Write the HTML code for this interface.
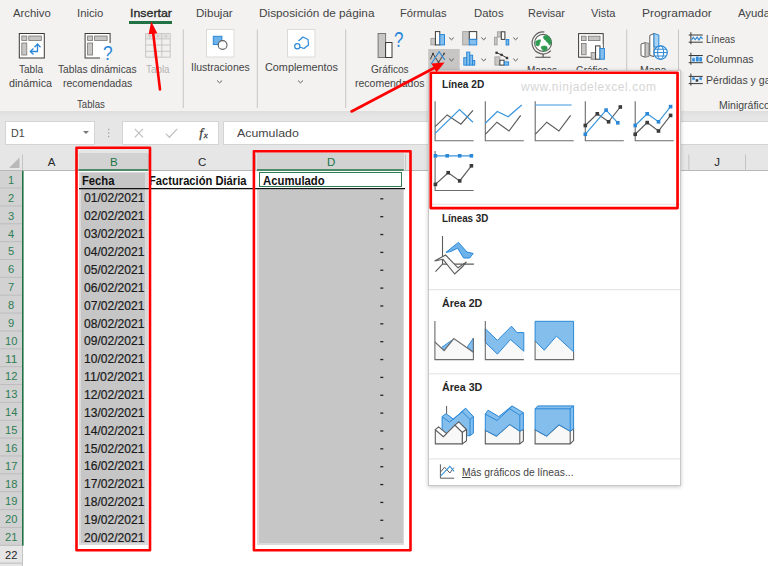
<!DOCTYPE html>
<html lang="es"><head><meta charset="utf-8"><title>Excel - Insertar grafico de lineas</title>
<style>
html,body{margin:0;padding:0;}
body{width:768px;height:566px;overflow:hidden;position:relative;background:#fff;font-family:"Liberation Sans",sans-serif;}
#root{position:absolute;left:0;top:0;width:768px;height:566px;overflow:hidden;}
#root div{position:absolute;box-sizing:border-box;}
#root span{position:absolute;white-space:nowrap;transform-origin:0 50%;}
#root svg{position:absolute;left:0;top:0;}
</style></head><body><div id="root">
<div style="left:0px;top:0px;width:768px;height:112px;background:#f3f2f1;"></div>
<div style="left:0px;top:111px;width:768px;height:42px;background:#e6e6e6;background:linear-gradient(#dedede 0px,#e3e3e3 3px,#e6e6e6 7px);"></div>
<div style="left:0px;top:152px;width:768px;height:414px;background:#ffffff;"></div>
<span style="left:12.5px;top:8.19px;font-size:11px;line-height:11px;color:#444444;transform:scaleX(1.0276);">Archivo</span>
<span style="left:77.3px;top:8.19px;font-size:11px;line-height:11px;color:#444444;transform:scaleX(1.0277);">Inicio</span>
<span style="left:129.5px;top:8.19px;font-size:11px;line-height:11px;color:#2b2b2b;transform:scaleX(1.1261);-webkit-text-stroke:0.32px #2b2b2b;">Insertar</span>
<span style="left:195.5px;top:8.19px;font-size:11px;line-height:11px;color:#444444;transform:scaleX(1.0528);">Dibujar</span>
<span style="left:258.5px;top:8.19px;font-size:11px;line-height:11px;color:#444444;transform:scaleX(1.0730);">Disposición de página</span>
<span style="left:400.3px;top:8.19px;font-size:11px;line-height:11px;color:#444444;transform:scaleX(1.0143);">Fórmulas</span>
<span style="left:473.7px;top:8.19px;font-size:11px;line-height:11px;color:#444444;transform:scaleX(1.0296);">Datos</span>
<span style="left:528.4px;top:8.19px;font-size:11px;line-height:11px;color:#444444;transform:scaleX(0.9920);">Revisar</span>
<span style="left:591px;top:8.19px;font-size:11px;line-height:11px;color:#444444;transform:scaleX(1.0055);">Vista</span>
<span style="left:641.8px;top:8.19px;font-size:11px;line-height:11px;color:#444444;transform:scaleX(1.0872);">Programador</span>
<span style="left:738px;top:8.19px;font-size:11px;line-height:11px;color:#444444;transform:scaleX(1.0323);">Ayuda</span>
<div style="left:129.2px;top:21.4px;width:42.9px;height:2.6px;background:#217346;"></div>
<svg width="768" height="566" viewBox="0 0 768 566"><line x1="183.3" y1="29.5" x2="183.3" y2="108" stroke="#cbc9c7" stroke-width="1.1"/><line x1="257.3" y1="29.5" x2="257.3" y2="108" stroke="#cbc9c7" stroke-width="1.1"/><line x1="345.7" y1="29.5" x2="345.7" y2="108" stroke="#cbc9c7" stroke-width="1.1"/><line x1="626.7" y1="29.5" x2="626.7" y2="108" stroke="#cbc9c7" stroke-width="1.1"/><line x1="678.5" y1="29.5" x2="678.5" y2="108" stroke="#cbc9c7" stroke-width="1.1"/><rect x="19.3" y="33.5" width="25" height="24.5" fill="#fff" stroke="#3b3a39" stroke-width="1"/><rect x="21.8" y="36" width="5" height="4.5" fill="#c8c6c4" stroke="#797775" stroke-width="0.8"/><rect x="28.8" y="36" width="12.5" height="4.5" fill="#c8c6c4" stroke="#797775" stroke-width="0.8"/><rect x="21.8" y="43" width="5" height="12" fill="#c8c6c4" stroke="#797775" stroke-width="0.8"/><path d="M30.5 51.5 H37.5 V44.5" fill="none" stroke="#2b88d8" stroke-width="1.3"/><path d="M33.5 48.5 L30.3 51.5 L33.5 54.5" fill="none" stroke="#2b88d8" stroke-width="1.3"/><path d="M34.5 47.2 L37.5 44 L40.5 47.2" fill="none" stroke="#2b88d8" stroke-width="1.3"/><rect x="85.1" y="33.5" width="25" height="24.5" fill="#fff" stroke="#3b3a39" stroke-width="1"/><rect x="87.6" y="36" width="5" height="4.5" fill="#c8c6c4" stroke="#797775" stroke-width="0.8"/><rect x="94.6" y="36" width="12.5" height="4.5" fill="#c8c6c4" stroke="#797775" stroke-width="0.8"/><rect x="87.6" y="43" width="5" height="12" fill="#c8c6c4" stroke="#797775" stroke-width="0.8"/><rect x="100" y="43" width="14" height="17" fill="#f3f2f1"/><rect x="100" y="43" width="10" height="14.5" fill="#fff"/><g stroke="#c8c6c4" stroke-width="1" fill="none"><rect x="145.6" y="33.6" width="24.6" height="23.6" fill="#f1f0ef"/><rect x="146" y="34" width="23.8" height="4.8" fill="#e4e2e0" stroke="none"/><path d="M145.6 38.9 H170.2 M145.6 45 H170.2 M145.6 51.3 H170.2 M154.2 33.6 V57.2 M161.8 33.6 V57.2"/></g><path d="M148.3 35.4 h3.2 l-1.6 1.9z M156.4 35.4 h3.2 l-1.6 1.9z M164.4 35.4 h3.2 l-1.6 1.9z" fill="#bebbb8"/></svg>
<span style="left:102.6px;top:41.52px;font-size:21px;line-height:21px;color:#2b88d8;transform:scaleX(0.8214);">?</span>
<span style="left:18.8px;top:64.31px;font-size:10.5px;line-height:10.5px;color:#444444;transform:scaleX(0.9558);">Tabla</span>
<span style="left:9.3px;top:78.41px;font-size:10.5px;line-height:10.5px;color:#444444;transform:scaleX(1.0230);">dinámica</span>
<span style="left:57.8px;top:64.31px;font-size:10.5px;line-height:10.5px;color:#444444;transform:scaleX(0.9758);">Tablas dinámicas</span>
<span style="left:62.8px;top:78.41px;font-size:10.5px;line-height:10.5px;color:#444444;transform:scaleX(0.9961);">recomendadas</span>
<span style="left:146px;top:64.31px;font-size:10.5px;line-height:10.5px;color:#b5b3b1;transform:scaleX(0.9399);">Tabla</span>
<span style="left:77px;top:98.91px;font-size:10.5px;line-height:10.5px;color:#444444;transform:scaleX(0.9157);">Tablas</span>
<svg width="768" height="566" viewBox="0 0 768 566"><rect x="206.5" y="29.5" width="27.5" height="27.5" fill="#fff" stroke="#dddbd9" stroke-width="1"/><rect x="213.3" y="36.3" width="8.6" height="8.2" fill="#6cb2eb" stroke="#2b88d8" stroke-width="1"/><circle cx="222.6" cy="45" r="4.4" fill="#fff" stroke="#605e5c" stroke-width="1.1"/></svg>
<span style="left:191px;top:62.41px;font-size:10.5px;line-height:10.5px;color:#444444;transform:scaleX(0.9974);">Ilustraciones</span>
<svg width="768" height="566" viewBox="0 0 768 566"><path d="M217.1 80.5 L219.6 82.9 L222.1 80.5" fill="none" stroke="#605e5c" stroke-width="1"/><rect x="287.5" y="29.5" width="27.5" height="27.5" fill="#fff" stroke="#dddbd9" stroke-width="1"/><path d="M298.5 41 L303 37 L308 39.5 L308.5 45 L304 48.5 L299.5 47" fill="none" stroke="#2b88d8" stroke-width="1.2" stroke-linejoin="round"/><circle cx="297.3" cy="46.3" r="2.6" fill="#fff" stroke="#2b88d8" stroke-width="1.2"/></svg>
<span style="left:264.8px;top:62.41px;font-size:10.5px;line-height:10.5px;color:#444444;transform:scaleX(1.0336);">Complementos</span>
<svg width="768" height="566" viewBox="0 0 768 566"><path d="M298 80.5 L300.5 82.9 L303 80.5" fill="none" stroke="#605e5c" stroke-width="1"/><rect x="378.1" y="33.5" width="7.5" height="24" fill="#c8c6c4" stroke="#797775" stroke-width="1"/><rect x="385.6" y="42.5" width="6.4" height="15" fill="#fff" stroke="#3b3a39" stroke-width="1"/></svg>
<span style="left:393.8px;top:30.00px;font-size:21.5px;line-height:21.5px;color:#2b88d8;transform:scaleX(0.7854);">?</span>
<span style="left:371px;top:64.31px;font-size:10.5px;line-height:10.5px;color:#444444;transform:scaleX(0.9618);">Gráficos</span>
<span style="left:355.2px;top:78.41px;font-size:10.5px;line-height:10.5px;color:#444444;transform:scaleX(1.0004);">recomendados</span>
<svg width="768" height="566" viewBox="0 0 768 566"><rect x="428.2" y="49" width="31.5" height="21.5" fill="#c8c6c4"/><rect x="430.9" y="38.4" width="4.5" height="6.5" fill="#c8c6c4" stroke="#a19f9d" stroke-width="0.9"/><rect x="435.4" y="31.6" width="4.4" height="13.3" fill="#fff" stroke="#3b3a39" stroke-width="1"/><rect x="439.9" y="34.6" width="4.6" height="10.3" fill="#83beec" stroke="#2b88d8" stroke-width="1"/><path d="M449.2 37.6 L451.5 39.8 L453.8 37.6" fill="none" stroke="#555350" stroke-width="1"/><rect x="462.7" y="31.6" width="6.6" height="13.3" fill="#c8c6c4" stroke="#a19f9d" stroke-width="0.9"/><rect x="469.3" y="31.6" width="7.4" height="7.8" fill="#fff" stroke="#3b3a39" stroke-width="1"/><rect x="469.3" y="39.4" width="7.4" height="5.5" fill="#83beec" stroke="#2b88d8" stroke-width="1"/><path d="M481.4 37.6 L483.7 39.8 L486.0 37.6" fill="none" stroke="#555350" stroke-width="1"/><rect x="494.5" y="37.2" width="2.6" height="7.7" fill="#c8c6c4" stroke="#a19f9d" stroke-width="0.9"/><rect x="497.4" y="31.8" width="3.6" height="5.2" fill="#c8c6c4" stroke="#a19f9d" stroke-width="0.9"/><rect x="501.3" y="31.8" width="3.6" height="7.6" fill="#fff" stroke="#3b3a39" stroke-width="1"/><rect x="506.2" y="39.6" width="2.5" height="5.3" fill="#83beec" stroke="#2b88d8" stroke-width="1.1"/><path d="M513.3 37.6 L515.6 39.8 L517.9 37.6" fill="none" stroke="#555350" stroke-width="1"/><path d="M430.4 59.3 L432.9 53.6 L438.5 62.4 L444.1 53.6" fill="none" stroke="#3b3a39" stroke-width="1"/><path d="M431 64.3 L439.1 51.8 L444.8 59.9" fill="none" stroke="#2b88d8" stroke-width="1.1"/><rect x="432.1" y="52.8" width="1.6" height="1.6" fill="#3b3a39"/><rect x="437.7" y="61.6" width="1.6" height="1.6" fill="#3b3a39"/><rect x="443.3" y="52.8" width="1.6" height="1.6" fill="#3b3a39"/><path d="M449.2 58.7 L451.5 60.9 L453.8 58.7" fill="none" stroke="#555350" stroke-width="1"/><rect x="463.8" y="57.7" width="2.9" height="7.4" fill="#83beec" stroke="#2b88d8" stroke-width="1"/><rect x="466.7" y="52.1" width="3.1" height="13.0" fill="#83beec" stroke="#2b88d8" stroke-width="1"/><rect x="469.8" y="55.2" width="2.8" height="9.9" fill="#83beec" stroke="#2b88d8" stroke-width="1"/><rect x="472.6" y="60.5" width="2.1" height="4.6" fill="#83beec" stroke="#2b88d8" stroke-width="1"/><path d="M481.4 58.7 L483.7 60.9 L486.0 58.7" fill="none" stroke="#555350" stroke-width="1"/><rect x="494.9" y="56.9" width="4.9" height="8.2" fill="#c8c6c4" stroke="#a19f9d" stroke-width="0.9"/><rect x="499.9" y="60.2" width="4.2" height="4.9" fill="#fff" stroke="#3b3a39" stroke-width="1"/><rect x="504.4" y="61.9" width="4.2" height="3.2" fill="#83beec" stroke="#2b88d8" stroke-width="1"/><path d="M496.6 52.8 L501.6 54.9 L507 58" fill="none" stroke="#3b3a39" stroke-width="1"/><rect x="495.4" y="51.6" width="2.4" height="2.4" fill="#3b3a39"/><rect x="500.4" y="53.7" width="2.4" height="2.4" fill="#3b3a39"/><rect x="505.8" y="56.8" width="2.4" height="2.4" fill="#3b3a39"/><path d="M513.3 58.7 L515.6 60.9 L517.9 58.7" fill="none" stroke="#555350" stroke-width="1"/><circle cx="543.1" cy="42.9" r="8.5" fill="#fff" stroke="#605e5c" stroke-width="1.1"/><path d="M535.6 41.5 q2.5 -2 4.8 -1.8 q0.6 2 -0.8 3.2 q0.4 1.8 -1.2 3 q-2 0.2 -2.4 -1z M543.4 36.4 q2 -1.2 3.4 -1.2 q3.2 1.6 4.4 5 q0.2 3 -1 5 q-2 -0.6 -2.2 -2.6 q-1.8 -0.6 -2.2 -2.4 q-2.4 -0.6 -2.4 -3.8z M541 46.8 q2.6 -1.4 5.6 -0.6 q1 1.6 0.4 3.4 q-1.4 1.6 -3.2 1.6 q-2.4 -1.6 -2.8 -4.4z" fill="#2e9a4f" stroke="#2e9a4f" stroke-width="0.6" stroke-linejoin="round"/><path d="M544.4 32 A11 11 0 1 0 550.9 50.7" fill="none" stroke="#605e5c" stroke-width="1.1"/><path d="M543.1 53.9 V57 M535.3 57.3 H550.6" stroke="#4a4846" stroke-width="1.1" fill="none"/></svg>
<span style="left:527px;top:64.81px;font-size:10.5px;line-height:10.5px;color:#444444;transform:scaleX(0.9519);">Mapas</span>
<svg width="768" height="566" viewBox="0 0 768 566"><rect x="578.6" y="33.6" width="24.6" height="23.6" fill="#fff" stroke="#3b3a39" stroke-width="1"/><rect x="581.5" y="36.2" width="4.6" height="4.4" fill="#c8c6c4" stroke="#797775" stroke-width="0.8"/><rect x="588.4" y="36.2" width="11.6" height="4.4" fill="#c8c6c4" stroke="#797775" stroke-width="0.8"/><rect x="581.5" y="43.4" width="4.6" height="11.4" fill="#c8c6c4" stroke="#797775" stroke-width="0.8"/><rect x="589.5" y="44" width="13.2" height="12.7" fill="#fff"/><rect x="590.2" y="57.8" width="15" height="2.4" fill="#f3f2f1"/><rect x="603.8" y="47.5" width="1.6" height="12" fill="#f3f2f1"/><rect x="591.2" y="52.6" width="4.4" height="6.6" fill="#c8c6c4" stroke="#8a8886" stroke-width="1"/><rect x="595.6" y="45.9" width="4.4" height="13.3" fill="#fff" stroke="#3b3a39" stroke-width="1"/><rect x="600" y="48.5" width="4.4" height="10.7" fill="#83beec" stroke="#2b88d8" stroke-width="1"/></svg>
<span style="left:575.5px;top:64.81px;font-size:10.5px;line-height:10.5px;color:#444444;transform:scaleX(0.9455);">Gráfico</span>
<svg width="768" height="566" viewBox="0 0 768 566"><polygon points="641,44.1 645.2,42.6 645.2,57.2 641,55.7" fill="#fff" stroke="#605e5c" stroke-width="1"/><polygon points="645.2,42.6 649,43.4 649,56.4 645.2,57.2" fill="#c8c6c4" stroke="#8a8886" stroke-width="1"/><polygon points="649.8,35.4 654,33.5 654,56.6 649.8,55.4" fill="#fff" stroke="#605e5c" stroke-width="1"/><polygon points="654,33.5 658.8,35 658.8,47 654,47" fill="#a9d3f2" stroke="#2b88d8" stroke-width="1"/><circle cx="660.6" cy="52.6" r="6.7" fill="#fff" stroke="#2b88d8" stroke-width="1.2"/><ellipse cx="660.6" cy="52.6" rx="3" ry="6.7" fill="none" stroke="#2b88d8" stroke-width="1"/><path d="M654 52.6 H667.2 M655.2 49.2 H666 M655.2 56 H666" stroke="#2b88d8" stroke-width="1" fill="none"/></svg>
<span style="left:640px;top:64.81px;font-size:10.5px;line-height:10.5px;color:#444444;transform:scaleX(1.0051);">Mapa</span>
<svg width="768" height="566" viewBox="0 0 768 566"><path d="M690.9 32.2 V44.2 M688.7 35 H702.8 M688.7 42.2 H702.8" stroke="#3b3a39" stroke-width="1" fill="none"/><path d="M691.6 39.6 L693.3 37.4 L695.2 39.6 L697.1 37.2 L699 39.9 L700.9 37 L702.6 38.8" fill="none" stroke="#2b88d8" stroke-width="1.1"/><path d="M690.9 52.7 V64.7 M688.7 55.5 H702.8 M688.7 62.7 H702.8" stroke="#3b3a39" stroke-width="1" fill="none"/><rect x="691.6" y="56.2" width="10.8" height="5.7" fill="#cfe5f7"/><rect x="692.3" y="58.2" width="2.5" height="3.2" fill="#2b88d8"/><rect x="696.1" y="56.6" width="2.5" height="4.8" fill="#2b88d8"/><rect x="699.4" y="57.3" width="2.5" height="4.1" fill="#2b88d8"/><path d="M690.9 73.60000000000001 V85.60000000000001 M688.7 76.4 H702.8 M688.7 83.60000000000001 H702.8" stroke="#3b3a39" stroke-width="1" fill="none"/><rect x="691.6" y="77" width="10.8" height="5.8" fill="#e3eef8"/><rect x="692.3" y="77.3" width="2.5" height="2.5" fill="#2b88d8"/><rect x="695.7" y="79.2" width="2.5" height="2.5" fill="#3b3a39"/><rect x="699.4" y="77.3" width="2.5" height="2.5" fill="#2b88d8"/></svg>
<span style="left:706px;top:33.91px;font-size:10.5px;line-height:10.5px;color:#444444;transform:scaleX(0.9197);">Líneas</span>
<span style="left:706px;top:54.41px;font-size:10.5px;line-height:10.5px;color:#444444;transform:scaleX(1.0067);">Columnas</span>
<span style="left:706px;top:75.31px;font-size:10.5px;line-height:10.5px;color:#444444;transform:scaleX(1.0059);">Pérdidas y ganancias</span>
<span style="left:719.3px;top:99.51px;font-size:10.5px;line-height:10.5px;color:#444444;transform:scaleX(0.9994);">Minigráficos</span>
<div style="left:4.6px;top:121px;width:90.3px;height:23.5px;background:#fff;border:1px solid #d4d4d4;"></div>
<span style="left:11.3px;top:127.97px;font-size:11.5px;line-height:11.5px;color:#444444;transform:scaleX(0.9318);">D1</span>
<svg width="768" height="566" viewBox="0 0 768 566"><path d="M83 131 h6 l-3 3z" fill="#777"/><circle cx="108.7" cy="129.5" r="0.7" fill="#999"/><circle cx="108.7" cy="133" r="0.7" fill="#999"/><circle cx="108.7" cy="136.5" r="0.7" fill="#999"/></svg>
<div style="left:122.3px;top:121px;width:96.8px;height:23.5px;background:#fff;border:1px solid #d4d4d4;"></div>
<svg width="768" height="566" viewBox="0 0 768 566"><path d="M134.8 128.9 L143 137.4 M143 128.9 L134.8 137.4" stroke="#c2c2c2" stroke-width="1.3" fill="none"/><path d="M165.8 133.6 L169.4 137.2 L177.2 128.9" stroke="#c2c2c2" stroke-width="1.3" fill="none"/></svg>
<span style="left:199.3px;top:126.17px;font-size:13.5px;line-height:13.5px;color:#444;-webkit-text-stroke:0.3px #444;font-family:'Liberation Serif',serif;font-style:italic;">f</span>
<span style="left:203.8px;top:130.78px;font-size:9px;line-height:9px;color:#444;-webkit-text-stroke:0.3px #444;font-family:'Liberation Serif',serif;font-style:italic;">x</span>
<div style="left:222.5px;top:121px;width:560px;height:23.5px;background:#fff;border:1px solid #d4d4d4;"></div>
<span style="left:236.7px;top:127.97px;font-size:11.5px;line-height:11.5px;color:#444444;transform:scaleX(1.0739);">Acumulado</span>
<div style="left:0px;top:152px;width:768px;height:18.5px;background:#e6e6e6;"></div>
<svg width="768" height="566" viewBox="0 0 768 566"><path d="M0 170.5 H768" stroke="#b8b8b8" stroke-width="1"/></svg>
<div style="left:78.5px;top:153.0px;width:69.5px;height:17.5px;background:#d2d2d2;"></div>
<div style="left:257px;top:153.0px;width:146.8px;height:17.5px;background:#d2d2d2;"></div>
<svg width="768" height="566" viewBox="0 0 768 566"><path d="M78.5 170 H148 M257 170 H403.8" stroke="#217346" stroke-width="1.5"/><path d="M22.5 154.5 V170.5" stroke="#c4c4c4" stroke-width="1"/><path d="M77.5 154.5 V170.5" stroke="#c4c4c4" stroke-width="1"/><path d="M148.5 154.5 V170.5" stroke="#c4c4c4" stroke-width="1"/><path d="M255.5 154.5 V170.5" stroke="#c4c4c4" stroke-width="1"/><path d="M405.5 154.5 V170.5" stroke="#c4c4c4" stroke-width="1"/><path d="M688.8 154.5 V170.5" stroke="#c4c4c4" stroke-width="1"/><path d="M745.5 154.5 V170.5" stroke="#c4c4c4" stroke-width="1"/><path d="M19.5 157.5 V168 H9z" fill="#b9b9b9"/></svg>
<span style="left:47.8px;top:157.27px;font-size:11.5px;line-height:11.5px;color:#262626;">A</span>
<span style="left:110px;top:157.27px;font-size:11.5px;line-height:11.5px;color:#217346;">B</span>
<span style="left:198px;top:157.27px;font-size:11.5px;line-height:11.5px;color:#262626;">C</span>
<span style="left:327px;top:157.27px;font-size:11.5px;line-height:11.5px;color:#217346;">D</span>
<span style="left:714.3px;top:157.27px;font-size:11.5px;line-height:11.5px;color:#262626;">J</span>
<div style="left:0px;top:170.7px;width:22.5px;height:375.06px;background:#d2d2d2;"></div>
<div style="left:0px;top:545.76px;width:22.5px;height:30px;background:#e6e6e6;"></div>
<svg width="768" height="566" viewBox="0 0 768 566"><path d="M0 188.06 H22.5" stroke="#bdbdbd" stroke-width="1"/><path d="M0 205.92 H22.5" stroke="#bdbdbd" stroke-width="1"/><path d="M0 223.78 H22.5" stroke="#bdbdbd" stroke-width="1"/><path d="M0 241.64 H22.5" stroke="#bdbdbd" stroke-width="1"/><path d="M0 259.50 H22.5" stroke="#bdbdbd" stroke-width="1"/><path d="M0 277.36 H22.5" stroke="#bdbdbd" stroke-width="1"/><path d="M0 295.22 H22.5" stroke="#bdbdbd" stroke-width="1"/><path d="M0 313.08 H22.5" stroke="#bdbdbd" stroke-width="1"/><path d="M0 330.94 H22.5" stroke="#bdbdbd" stroke-width="1"/><path d="M0 348.80 H22.5" stroke="#bdbdbd" stroke-width="1"/><path d="M0 366.66 H22.5" stroke="#bdbdbd" stroke-width="1"/><path d="M0 384.52 H22.5" stroke="#bdbdbd" stroke-width="1"/><path d="M0 402.38 H22.5" stroke="#bdbdbd" stroke-width="1"/><path d="M0 420.24 H22.5" stroke="#bdbdbd" stroke-width="1"/><path d="M0 438.10 H22.5" stroke="#bdbdbd" stroke-width="1"/><path d="M0 455.96 H22.5" stroke="#bdbdbd" stroke-width="1"/><path d="M0 473.82 H22.5" stroke="#bdbdbd" stroke-width="1"/><path d="M0 491.68 H22.5" stroke="#bdbdbd" stroke-width="1"/><path d="M0 509.54 H22.5" stroke="#bdbdbd" stroke-width="1"/><path d="M0 527.40 H22.5" stroke="#bdbdbd" stroke-width="1"/><path d="M0 545.26 H22.5" stroke="#bdbdbd" stroke-width="1"/><path d="M0 563.12 H22.5" stroke="#bdbdbd" stroke-width="1"/><path d="M0 580.98 H22.5" stroke="#bdbdbd" stroke-width="1"/><path d="M22.8 170.7 V545.76" stroke="#217346" stroke-width="1.6"/><path d="M22.5 545.76 V566" stroke="#c4c4c4" stroke-width="1"/></svg>
<span style="left:7.999999999999999px;top:174.97px;font-size:11.5px;line-height:11.5px;color:#2e7d55;transform:scaleX(0.9678);">1</span>
<span style="left:7.999999999999999px;top:192.83px;font-size:11.5px;line-height:11.5px;color:#2e7d55;transform:scaleX(0.9678);">2</span>
<span style="left:7.999999999999999px;top:210.69px;font-size:11.5px;line-height:11.5px;color:#2e7d55;transform:scaleX(0.9678);">3</span>
<span style="left:7.999999999999999px;top:228.55px;font-size:11.5px;line-height:11.5px;color:#2e7d55;transform:scaleX(0.9678);">4</span>
<span style="left:7.999999999999999px;top:246.41px;font-size:11.5px;line-height:11.5px;color:#2e7d55;transform:scaleX(0.9678);">5</span>
<span style="left:7.999999999999999px;top:264.27px;font-size:11.5px;line-height:11.5px;color:#2e7d55;transform:scaleX(0.9678);">6</span>
<span style="left:7.999999999999999px;top:282.13px;font-size:11.5px;line-height:11.5px;color:#2e7d55;transform:scaleX(0.9678);">7</span>
<span style="left:7.999999999999999px;top:299.99px;font-size:11.5px;line-height:11.5px;color:#2e7d55;transform:scaleX(0.9678);">8</span>
<span style="left:7.999999999999999px;top:317.85px;font-size:11.5px;line-height:11.5px;color:#2e7d55;transform:scaleX(0.9678);">9</span>
<span style="left:4.799999999999999px;top:335.71px;font-size:11.5px;line-height:11.5px;color:#2e7d55;transform:scaleX(0.9690);">10</span>
<span style="left:4.799999999999999px;top:353.57px;font-size:11.5px;line-height:11.5px;color:#2e7d55;transform:scaleX(1.0374);">11</span>
<span style="left:4.799999999999999px;top:371.43px;font-size:11.5px;line-height:11.5px;color:#2e7d55;transform:scaleX(0.9690);">12</span>
<span style="left:4.799999999999999px;top:389.29px;font-size:11.5px;line-height:11.5px;color:#2e7d55;transform:scaleX(0.9690);">13</span>
<span style="left:4.799999999999999px;top:407.15px;font-size:11.5px;line-height:11.5px;color:#2e7d55;transform:scaleX(0.9690);">14</span>
<span style="left:4.799999999999999px;top:425.01px;font-size:11.5px;line-height:11.5px;color:#2e7d55;transform:scaleX(0.9690);">15</span>
<span style="left:4.799999999999999px;top:442.87px;font-size:11.5px;line-height:11.5px;color:#2e7d55;transform:scaleX(0.9690);">16</span>
<span style="left:4.799999999999999px;top:460.73px;font-size:11.5px;line-height:11.5px;color:#2e7d55;transform:scaleX(0.9690);">17</span>
<span style="left:4.799999999999999px;top:478.59px;font-size:11.5px;line-height:11.5px;color:#2e7d55;transform:scaleX(0.9690);">18</span>
<span style="left:4.799999999999999px;top:496.45px;font-size:11.5px;line-height:11.5px;color:#2e7d55;transform:scaleX(0.9690);">19</span>
<span style="left:4.799999999999999px;top:514.31px;font-size:11.5px;line-height:11.5px;color:#2e7d55;transform:scaleX(0.9690);">20</span>
<span style="left:4.799999999999999px;top:532.17px;font-size:11.5px;line-height:11.5px;color:#2e7d55;transform:scaleX(0.9690);">21</span>
<span style="left:4.799999999999999px;top:550.03px;font-size:11.5px;line-height:11.5px;color:#262626;transform:scaleX(0.9690);">22</span>
<div style="left:78.5px;top:171.5px;width:69px;height:373.56px;background:#dadada;"></div>
<div style="left:80.6px;top:172.7px;width:64.8px;height:370.56px;background:#c6c6c6;"></div>
<div style="left:257px;top:189.06px;width:146.8px;height:355.7px;background:#dadada;"></div>
<div style="left:258.5px;top:190.06px;width:144px;height:352.7px;background:#c6c6c6;"></div>
<svg width="768" height="566" viewBox="0 0 768 566"><path d="M79 188.56 H405" stroke="#111" stroke-width="1.3"/></svg>
<div style="left:259.3px;top:171.7px;width:142.8px;height:15.459999999999999px;background:#fff;border:1.2px solid #2e7d55;"></div>
<span style="left:82.4px;top:174.00px;font-size:13px;line-height:13px;color:#111;font-weight:700;transform:scaleX(0.8649);">Fecha</span>
<span style="left:149.2px;top:174.00px;font-size:13px;line-height:13px;color:#111;font-weight:700;transform:scaleX(0.8595);">Facturación Diária</span>
<span style="left:263.3px;top:174.00px;font-size:13px;line-height:13px;color:#111;font-weight:700;transform:scaleX(0.8715);">Acumulado</span>
<span style="left:83.6px;top:192.49px;font-size:12.6px;line-height:12.6px;color:#1a1a1a;transform:scaleX(0.9583);-webkit-text-stroke:0.2px #1a1a1a;">01/02/2021</span>
<svg width="768" height="566" viewBox="0 0 768 566"><rect x="380.3" y="198.16" width="3" height="1.3" fill="#222"/></svg>
<span style="left:83.6px;top:210.35px;font-size:12.6px;line-height:12.6px;color:#1a1a1a;transform:scaleX(0.9583);-webkit-text-stroke:0.2px #1a1a1a;">02/02/2021</span>
<svg width="768" height="566" viewBox="0 0 768 566"><rect x="380.3" y="216.02" width="3" height="1.3" fill="#222"/></svg>
<span style="left:83.6px;top:228.21px;font-size:12.6px;line-height:12.6px;color:#1a1a1a;transform:scaleX(0.9583);-webkit-text-stroke:0.2px #1a1a1a;">03/02/2021</span>
<svg width="768" height="566" viewBox="0 0 768 566"><rect x="380.3" y="233.88" width="3" height="1.3" fill="#222"/></svg>
<span style="left:83.6px;top:246.07px;font-size:12.6px;line-height:12.6px;color:#1a1a1a;transform:scaleX(0.9583);-webkit-text-stroke:0.2px #1a1a1a;">04/02/2021</span>
<svg width="768" height="566" viewBox="0 0 768 566"><rect x="380.3" y="251.74" width="3" height="1.3" fill="#222"/></svg>
<span style="left:83.6px;top:263.93px;font-size:12.6px;line-height:12.6px;color:#1a1a1a;transform:scaleX(0.9583);-webkit-text-stroke:0.2px #1a1a1a;">05/02/2021</span>
<svg width="768" height="566" viewBox="0 0 768 566"><rect x="380.3" y="269.60" width="3" height="1.3" fill="#222"/></svg>
<span style="left:83.6px;top:281.79px;font-size:12.6px;line-height:12.6px;color:#1a1a1a;transform:scaleX(0.9583);-webkit-text-stroke:0.2px #1a1a1a;">06/02/2021</span>
<svg width="768" height="566" viewBox="0 0 768 566"><rect x="380.3" y="287.46" width="3" height="1.3" fill="#222"/></svg>
<span style="left:83.6px;top:299.65px;font-size:12.6px;line-height:12.6px;color:#1a1a1a;transform:scaleX(0.9583);-webkit-text-stroke:0.2px #1a1a1a;">07/02/2021</span>
<svg width="768" height="566" viewBox="0 0 768 566"><rect x="380.3" y="305.32" width="3" height="1.3" fill="#222"/></svg>
<span style="left:83.6px;top:317.51px;font-size:12.6px;line-height:12.6px;color:#1a1a1a;transform:scaleX(0.9583);-webkit-text-stroke:0.2px #1a1a1a;">08/02/2021</span>
<svg width="768" height="566" viewBox="0 0 768 566"><rect x="380.3" y="323.18" width="3" height="1.3" fill="#222"/></svg>
<span style="left:83.6px;top:335.37px;font-size:12.6px;line-height:12.6px;color:#1a1a1a;transform:scaleX(0.9583);-webkit-text-stroke:0.2px #1a1a1a;">09/02/2021</span>
<svg width="768" height="566" viewBox="0 0 768 566"><rect x="380.3" y="341.04" width="3" height="1.3" fill="#222"/></svg>
<span style="left:83.6px;top:353.23px;font-size:12.6px;line-height:12.6px;color:#1a1a1a;transform:scaleX(0.9583);-webkit-text-stroke:0.2px #1a1a1a;">10/02/2021</span>
<svg width="768" height="566" viewBox="0 0 768 566"><rect x="380.3" y="358.90" width="3" height="1.3" fill="#222"/></svg>
<span style="left:83.6px;top:371.09px;font-size:12.6px;line-height:12.6px;color:#1a1a1a;transform:scaleX(0.9725);-webkit-text-stroke:0.2px #1a1a1a;">11/02/2021</span>
<svg width="768" height="566" viewBox="0 0 768 566"><rect x="380.3" y="376.76" width="3" height="1.3" fill="#222"/></svg>
<span style="left:83.6px;top:388.95px;font-size:12.6px;line-height:12.6px;color:#1a1a1a;transform:scaleX(0.9583);-webkit-text-stroke:0.2px #1a1a1a;">12/02/2021</span>
<svg width="768" height="566" viewBox="0 0 768 566"><rect x="380.3" y="394.62" width="3" height="1.3" fill="#222"/></svg>
<span style="left:83.6px;top:406.81px;font-size:12.6px;line-height:12.6px;color:#1a1a1a;transform:scaleX(0.9583);-webkit-text-stroke:0.2px #1a1a1a;">13/02/2021</span>
<svg width="768" height="566" viewBox="0 0 768 566"><rect x="380.3" y="412.48" width="3" height="1.3" fill="#222"/></svg>
<span style="left:83.6px;top:424.67px;font-size:12.6px;line-height:12.6px;color:#1a1a1a;transform:scaleX(0.9583);-webkit-text-stroke:0.2px #1a1a1a;">14/02/2021</span>
<svg width="768" height="566" viewBox="0 0 768 566"><rect x="380.3" y="430.34" width="3" height="1.3" fill="#222"/></svg>
<span style="left:83.6px;top:442.53px;font-size:12.6px;line-height:12.6px;color:#1a1a1a;transform:scaleX(0.9583);-webkit-text-stroke:0.2px #1a1a1a;">15/02/2021</span>
<svg width="768" height="566" viewBox="0 0 768 566"><rect x="380.3" y="448.20" width="3" height="1.3" fill="#222"/></svg>
<span style="left:83.6px;top:460.39px;font-size:12.6px;line-height:12.6px;color:#1a1a1a;transform:scaleX(0.9583);-webkit-text-stroke:0.2px #1a1a1a;">16/02/2021</span>
<svg width="768" height="566" viewBox="0 0 768 566"><rect x="380.3" y="466.06" width="3" height="1.3" fill="#222"/></svg>
<span style="left:83.6px;top:478.25px;font-size:12.6px;line-height:12.6px;color:#1a1a1a;transform:scaleX(0.9583);-webkit-text-stroke:0.2px #1a1a1a;">17/02/2021</span>
<svg width="768" height="566" viewBox="0 0 768 566"><rect x="380.3" y="483.92" width="3" height="1.3" fill="#222"/></svg>
<span style="left:83.6px;top:496.11px;font-size:12.6px;line-height:12.6px;color:#1a1a1a;transform:scaleX(0.9583);-webkit-text-stroke:0.2px #1a1a1a;">18/02/2021</span>
<svg width="768" height="566" viewBox="0 0 768 566"><rect x="380.3" y="501.78" width="3" height="1.3" fill="#222"/></svg>
<span style="left:83.6px;top:513.97px;font-size:12.6px;line-height:12.6px;color:#1a1a1a;transform:scaleX(0.9583);-webkit-text-stroke:0.2px #1a1a1a;">19/02/2021</span>
<svg width="768" height="566" viewBox="0 0 768 566"><rect x="380.3" y="519.64" width="3" height="1.3" fill="#222"/></svg>
<span style="left:83.6px;top:531.83px;font-size:12.6px;line-height:12.6px;color:#1a1a1a;transform:scaleX(0.9583);-webkit-text-stroke:0.2px #1a1a1a;">20/02/2021</span>
<svg width="768" height="566" viewBox="0 0 768 566"><rect x="380.3" y="537.50" width="3" height="1.3" fill="#222"/></svg>
<div style="left:428px;top:70.2px;width:252.5px;height:415.6px;background:#fff;border:1px solid #c8c8c8;box-shadow:0 1px 4px rgba(0,0,0,0.22);"></div>
<svg width="768" height="566" viewBox="0 0 768 566"><path d="M435.1 101.3 V140.8 H473.6" fill="none" stroke="#6b6b6b" stroke-width="1.1"/><polyline points="435.1,126.6 447.2,114.9 460.9,124.2 473.0,110.4" fill="none" stroke="#5c5c5c" stroke-width="1.2" stroke-linejoin="miter"/><polyline points="435.1,133.4 459.5,109.6 473.0,122.3" fill="none" stroke="#3a96dd" stroke-width="1.2" stroke-linejoin="miter"/><path d="M485.3 101.3 V140.8 H523.8" fill="none" stroke="#6b6b6b" stroke-width="1.1"/><polyline points="485.3,123.2 497.3,111.5 508.2,116.7 521.7,105.0" fill="none" stroke="#3a96dd" stroke-width="1.2" stroke-linejoin="miter"/><polyline points="485.3,134.3 496.9,122.2 509.0,131.0 520.7,115.4" fill="none" stroke="#5c5c5c" stroke-width="1.2" stroke-linejoin="miter"/><path d="M535.2 101.3 V140.8 H573.7" fill="none" stroke="#6b6b6b" stroke-width="1.1"/><polyline points="535.2,105.0 571.6,105.0" fill="none" stroke="#3a96dd" stroke-width="1.2" stroke-linejoin="miter"/><polyline points="535.2,134.3 546.8,122.2 558.9,131.0 570.6,115.4" fill="none" stroke="#5c5c5c" stroke-width="1.2" stroke-linejoin="miter"/><path d="M585.3 101.3 V140.8 H623.8" fill="none" stroke="#6b6b6b" stroke-width="1.1"/><polyline points="585.3,125.5 597.3,113.8 608.6,121.8 620.3,107.0" fill="none" stroke="#5c5c5c" stroke-width="1.2" stroke-linejoin="miter"/><polyline points="585.3,134.3 606.1,110.1 617.8,122.8" fill="none" stroke="#3a96dd" stroke-width="1.2" stroke-linejoin="miter"/><rect x="583.5" y="123.7" width="3.6" height="3.6" fill="#3b3b3b"/><rect x="595.5" y="112.0" width="3.6" height="3.6" fill="#3b3b3b"/><rect x="606.8" y="120.0" width="3.6" height="3.6" fill="#3b3b3b"/><rect x="618.5" y="105.2" width="3.6" height="3.6" fill="#3b3b3b"/><rect x="583.5" y="132.5" width="3.6" height="3.6" fill="#2b88d8"/><rect x="604.3" y="108.3" width="3.6" height="3.6" fill="#2b88d8"/><rect x="616.0" y="121.0" width="3.6" height="3.6" fill="#2b88d8"/><path d="M635.2 101.3 V140.8 H673.7" fill="none" stroke="#6b6b6b" stroke-width="1.1"/><polyline points="635.2,134.3 647.2,122.6 658.5,131.0 670.6,115.4" fill="none" stroke="#5c5c5c" stroke-width="1.2" stroke-linejoin="miter"/><polyline points="635.2,125.5 647.2,113.8 658.5,121.8 670.6,106.6" fill="none" stroke="#3a96dd" stroke-width="1.2" stroke-linejoin="miter"/><rect x="633.4" y="132.5" width="3.6" height="3.6" fill="#3b3b3b"/><rect x="645.4" y="120.8" width="3.6" height="3.6" fill="#3b3b3b"/><rect x="656.7" y="129.2" width="3.6" height="3.6" fill="#3b3b3b"/><rect x="668.8" y="113.6" width="3.6" height="3.6" fill="#3b3b3b"/><rect x="633.4" y="123.7" width="3.6" height="3.6" fill="#2b88d8"/><rect x="645.4" y="112.0" width="3.6" height="3.6" fill="#2b88d8"/><rect x="656.7" y="120.0" width="3.6" height="3.6" fill="#2b88d8"/><rect x="668.8" y="104.8" width="3.6" height="3.6" fill="#2b88d8"/><path d="M435.1 151 V190.5 H473.6" fill="none" stroke="#6b6b6b" stroke-width="1.1"/><polyline points="435.4,184.4 448.2,172.7 459.7,180.9 471.4,165.8" fill="none" stroke="#5c5c5c" stroke-width="1.2" stroke-linejoin="miter"/><polyline points="435.4,155.8 447.2,155.8 459.7,155.8 471.4,155.8" fill="none" stroke="#3a96dd" stroke-width="1.2" stroke-linejoin="miter"/><rect x="433.6" y="182.6" width="3.6" height="3.6" fill="#3b3b3b"/><rect x="446.4" y="170.9" width="3.6" height="3.6" fill="#3b3b3b"/><rect x="457.9" y="179.1" width="3.6" height="3.6" fill="#3b3b3b"/><rect x="469.6" y="164.0" width="3.6" height="3.6" fill="#3b3b3b"/><rect x="433.6" y="154.0" width="3.6" height="3.6" fill="#2b88d8"/><rect x="445.4" y="154.0" width="3.6" height="3.6" fill="#2b88d8"/><rect x="457.9" y="154.0" width="3.6" height="3.6" fill="#2b88d8"/><rect x="469.6" y="154.0" width="3.6" height="3.6" fill="#2b88d8"/><path d="M429 204.3 H680" stroke="#e1e1e1" stroke-width="1"/><path d="M429 289.7 H680" stroke="#e1e1e1" stroke-width="1"/><path d="M429 373.8 H680" stroke="#e1e1e1" stroke-width="1"/><path d="M429 458.9 H680" stroke="#e1e1e1" stroke-width="1"/><path d="M442.5 235.9 V264.1 H473.9 M442.5 264.1 L435.5 271.7" fill="none" stroke="#5c5c5c" stroke-width="1.1"/><polygon points="445.9,252.4 458.4,242.4 467.1,252.1 473.2,253.4 469.7,258 463.6,258 457.6,248.2 450.8,251.5" fill="#6cb2eb" stroke="#2b88d8" stroke-width="1"/><polygon points="434.6,261 445.6,255 458,267.8 466.5,261.9 462.6,266.5 454.7,274 443,259.3" fill="#f8f8f8" stroke="#5c5c5c" stroke-width="1.1"/><polygon points="434.9,342.0 444.1,350.6 453.8,338.5 473.4,352.2 473.4,359.6 434.9,359.6" fill="#f8f8f8"/><polygon points="441.7,347.3 452.5,339.8 444.1,350.2" fill="#83beec" stroke="#2b88d8" stroke-width="0.9"/><polygon points="467.1,347.3 473.4,338.1 473.4,352.2" fill="#83beec" stroke="#2b88d8" stroke-width="0.9"/><polyline points="434.9,342.0 444.1,350.6 453.8,338.5 473.4,352.2" fill="none" stroke="#6e6e6e" stroke-width="1.2" stroke-linejoin="miter"/><path d="M434.9 320.9 V359.59999999999997 H473.4 V338.09999999999997" fill="none" stroke="#6b6b6b" stroke-width="1.1"/><polygon points="485.3,342.4 497.4,354.1 510.5,339.5 523.8,351.2 523.8,359.6 485.3,359.6" fill="#f8f8f8"/><polygon points="485.3,328.7 497.4,340.4 511.5,326.2 516.9,332.6 523.8,332.6 523.8,351.2 510.5,339.5 497.4,354.1 485.3,342.4" fill="#83beec" stroke="#2b88d8" stroke-width="1"/><path d="M485.3 320.9 V359.59999999999997 H523.8" fill="none" stroke="#6b6b6b" stroke-width="1.1"/><rect x="535.1" y="321.29999999999995" width="38.5" height="38.3" fill="#f8f8f8"/><polygon points="535.1,321.3 573.6,321.3 573.6,351.8 556.4,336.1 544.3,350.2 535.1,341.0" fill="#83beec" stroke="#2b88d8" stroke-width="1"/><path d="M535.1 341.0 V359.59999999999997 H573.6 V351.79999999999995" fill="none" stroke="#6b6b6b" stroke-width="1.1"/><path d="M446.6 405.9 V414.1" stroke="#5c5c5c" stroke-width="1"/><polygon points="442.1,416.6 446.0,413.7 453.4,419.1 465.7,408.2 473.4,416.6 473.4,433.2 470.0,435.7 442.1,435.7" fill="#83beec" stroke="#2b88d8" stroke-width="1"/><polyline points="442.1,416.6 449.5,422.1 462.2,411.7 470.0,419.5 470.0,435.7" fill="none" stroke="#2b88d8" stroke-width="1"/><polyline points="470.0,419.5 473.4,416.6" fill="none" stroke="#2b88d8" stroke-width="1"/><polyline points="462.2,411.7 465.7,408.2" fill="none" stroke="#2b88d8" stroke-width="1"/><polygon points="435.3,429.7 438.6,426.8 446.2,433.8 455.0,425.2 458.7,421.9 466.5,429.5 466.5,440.8 462.4,443.9 435.3,443.9" fill="#f8f8f8"/><polygon points="435.3,429.7 443.3,436.7 455.0,425.2 462.4,432.4 462.4,443.9 435.3,443.9" fill="#f8f8f8" stroke="#5c5c5c" stroke-width="1.1" stroke-linejoin="round"/><polygon points="435.3,429.7 438.6,426.8 446.6,433.6 443.3,436.7" fill="#fff" stroke="#5c5c5c" stroke-width="1.1" stroke-linejoin="round"/><polygon points="455.0,425.2 458.7,421.9 466.5,429.5 462.4,432.4" fill="#fff" stroke="#5c5c5c" stroke-width="1.1" stroke-linejoin="round"/><polygon points="462.4,432.4 466.5,429.5 466.5,440.8 462.4,443.9" fill="#fff" stroke="#5c5c5c" stroke-width="1.1" stroke-linejoin="round"/><polygon points="485.3,430.3 496.4,436.1 509.7,424.4 519.8,431.2 523.4,429.3 523.4,441.0 519.8,443.9 485.3,443.9" fill="#f8f8f8" stroke="#5c5c5c" stroke-width="1.1"/><path d="M519.8 431.2 V443.9" stroke="#5c5c5c" stroke-width="1.1"/><polygon points="485.3,414.1 488.0,410.2 498.8,416.6 512.0,405.9 523.4,412.7 523.4,429.3 519.8,431.2 509.7,424.4 496.4,436.1 485.3,430.3" fill="#83beec" stroke="#2b88d8" stroke-width="1"/><polyline points="485.3,414.1 497.0,420.5 509.7,408.8 519.8,415.2 519.8,431.2" fill="none" stroke="#2b88d8" stroke-width="1"/><polyline points="519.8,415.2 523.4,412.7" fill="none" stroke="#2b88d8" stroke-width="1"/><polyline points="509.7,408.8 512.0,405.9" fill="none" stroke="#2b88d8" stroke-width="1"/><polygon points="535.1,429.7 546.6,436.1 558.9,424.8 570.2,431.2 573.6,428.9 573.6,440.6 570.2,443.9 535.1,443.9" fill="#f8f8f8" stroke="#5c5c5c" stroke-width="1.1"/><path d="M570.2 431.2 V443.9" stroke="#5c5c5c" stroke-width="1.1"/><polygon points="535.1,408.8 537.8,405.9 573.6,405.9 573.6,428.9 570.2,431.2 558.9,424.8 546.6,436.1 535.1,429.7" fill="#83beec" stroke="#2b88d8" stroke-width="1"/><polyline points="535.1,408.8 570.2,408.8 570.2,431.2" fill="none" stroke="#2b88d8" stroke-width="1"/><polyline points="570.2,408.8 573.6,405.9" fill="none" stroke="#2b88d8" stroke-width="1"/><path d="M440.4 464.3 V478.2 H454.2" fill="none" stroke="#5c5c5c" stroke-width="1"/><path d="M440.8 471.8 L444.5 467.2 L449.9 473 L453.7 467.6" fill="none" stroke="#5c5c5c" stroke-width="1"/><path d="M440.8 475.9 L449.9 466.3 L454.1 471.3" fill="none" stroke="#3a96dd" stroke-width="1.1"/></svg>
<span style="left:442.3px;top:78.59px;font-size:11px;line-height:11px;color:#262626;font-weight:700;transform:scaleX(0.9202);">Línea 2D</span>
<span style="left:521px;top:81.22px;font-size:12.5px;line-height:12.5px;color:#d6d6d6;transform:scaleX(0.9547);letter-spacing:0.6px;">www.ninjadelexcel.com</span>
<span style="left:442.3px;top:212.89px;font-size:11px;line-height:11px;color:#262626;font-weight:700;transform:scaleX(0.8909);">Líneas 3D</span>
<span style="left:442.3px;top:297.89px;font-size:11px;line-height:11px;color:#262626;font-weight:700;transform:scaleX(0.9693);">Área 2D</span>
<span style="left:442.3px;top:381.99px;font-size:11px;line-height:11px;color:#262626;font-weight:700;transform:scaleX(0.9693);">Área 3D</span>
<span style="left:462.2px;top:466.99px;font-size:11px;line-height:11px;color:#444444;transform:scaleX(0.9351);"><u>M</u>ás gráficos de líneas...</span>
<svg width="768" height="566" viewBox="0 0 768 566"><rect x="76.5" y="147.70000000000002" width="73.50000000000001" height="402.5" fill="none" stroke="#ff0000" stroke-width="2.6" stroke-linejoin="round"/><rect x="253.9" y="151.3" width="156.60000000000002" height="399.0" fill="none" stroke="#ff0000" stroke-width="2.6" stroke-linejoin="round"/><rect x="430.75" y="72.75" width="246.8" height="135.3" fill="none" stroke="#ff0000" stroke-width="2.7" stroke-linejoin="round"/><path d="M160 89.5 L152.8 30" stroke="#ff0000" stroke-width="2.6" fill="none" stroke-linecap="round"/><polygon points="151.2,21.5 157.3,33.2 148.6,34.2" fill="#ff0000"/><path d="M351.5 111.5 L436 67" stroke="#ff0000" stroke-width="2.6" fill="none" stroke-linecap="round"/><polygon points="444.5,62.6 436.5,72.6 431.5,63.4" fill="#ff0000"/></svg>
</div></body></html>
